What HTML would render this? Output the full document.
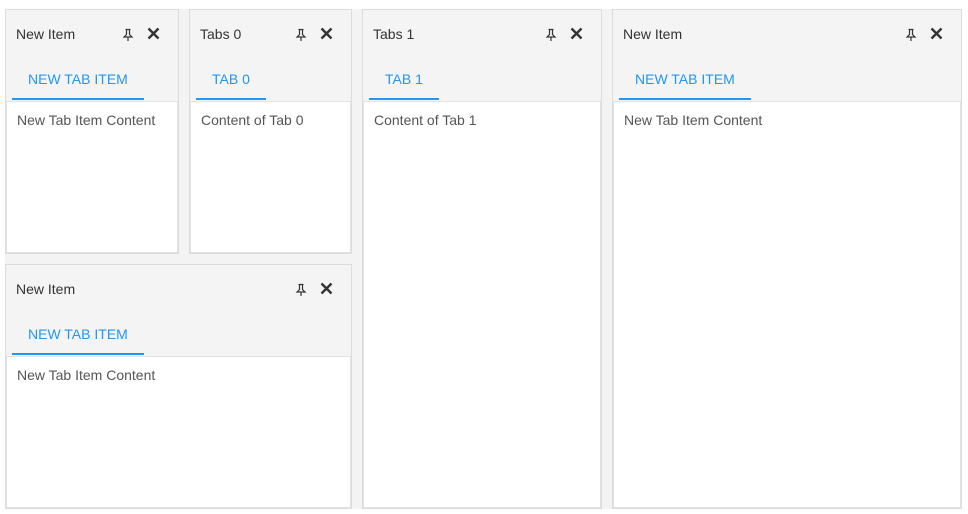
<!DOCTYPE html>
<html><head><style>
body{margin:0;width:968px;height:514px;background:#fff;position:relative;overflow:hidden;font-family:"Liberation Sans",sans-serif}
.gap{position:absolute;background:#f3f3f3}
.p{position:absolute;border:1px solid #dcdcdc;background:#f4f4f4;box-sizing:border-box}
.t{position:absolute;left:10px;top:16px;font-size:14px;color:#333}
.pin{position:absolute;top:18px}
.x{position:absolute;top:17px}
.tab{position:absolute;left:6px;top:58px;height:30px;border-bottom:2px solid #2196f3;padding:0 16px;font-size:14px;color:#2196f3;line-height:22px}
.c{position:absolute;left:0;right:0;top:91px;bottom:0;background:#fff;border:1px solid #e2e2e2;box-sizing:border-box}
.c span{position:absolute;left:10px;top:10px;font-size:14px;color:#555}
</style></head><body>
<div class="gap" style="left:351px;top:9px;width:11px;height:500px"></div>
<div class="gap" style="left:600px;top:9px;width:12px;height:500px"></div>
<div class="gap" style="left:5px;top:253px;width:346px;height:11px"></div>
<div class="gap" style="left:177px;top:9px;width:12px;height:245px"></div>

<div class="p" style="left:5px;top:9px;width:174px;height:245px">
<div class="t">New Item</div>
<svg class="pin" style="left:116px" width="12" height="14" viewBox="0 0 12 14"><path d="M3.5 1.5h5M4.5 1.5v5L2 9h8L7.5 6.5v-5M6 9v4" fill="none" stroke="#333" stroke-width="1.2"/></svg>
<svg class="x" style="left:141px" width="13" height="13" viewBox="0 0 13 13"><path d="M1.5 1.5l10 10M11.5 1.5l-10 10" stroke="#333" stroke-width="2.4"/></svg>
<div class="tab">NEW TAB ITEM</div>
<div class="c"><span>New Tab Item Content</span></div></div>

<div class="p" style="left:189px;top:9px;width:163px;height:245px">
<div class="t">Tabs 0</div>
<svg class="pin" style="left:105px" width="12" height="14" viewBox="0 0 12 14"><path d="M3.5 1.5h5M4.5 1.5v5L2 9h8L7.5 6.5v-5M6 9v4" fill="none" stroke="#333" stroke-width="1.2"/></svg>
<svg class="x" style="left:130px" width="13" height="13" viewBox="0 0 13 13"><path d="M1.5 1.5l10 10M11.5 1.5l-10 10" stroke="#333" stroke-width="2.4"/></svg>
<div class="tab">TAB 0</div>
<div class="c"><span>Content of Tab 0</span></div></div>

<div class="p" style="left:5px;top:264px;width:347px;height:245px">
<div class="t">New Item</div>
<svg class="pin" style="left:289px" width="12" height="14" viewBox="0 0 12 14"><path d="M3.5 1.5h5M4.5 1.5v5L2 9h8L7.5 6.5v-5M6 9v4" fill="none" stroke="#333" stroke-width="1.2"/></svg>
<svg class="x" style="left:314px" width="13" height="13" viewBox="0 0 13 13"><path d="M1.5 1.5l10 10M11.5 1.5l-10 10" stroke="#333" stroke-width="2.4"/></svg>
<div class="tab">NEW TAB ITEM</div>
<div class="c"><span>New Tab Item Content</span></div></div>

<div class="p" style="left:362px;top:9px;width:240px;height:500px">
<div class="t">Tabs 1</div>
<svg class="pin" style="left:182px" width="12" height="14" viewBox="0 0 12 14"><path d="M3.5 1.5h5M4.5 1.5v5L2 9h8L7.5 6.5v-5M6 9v4" fill="none" stroke="#333" stroke-width="1.2"/></svg>
<svg class="x" style="left:207px" width="13" height="13" viewBox="0 0 13 13"><path d="M1.5 1.5l10 10M11.5 1.5l-10 10" stroke="#333" stroke-width="2.4"/></svg>
<div class="tab">TAB 1</div>
<div class="c"><span>Content of Tab 1</span></div></div>

<div class="p" style="left:612px;top:9px;width:350px;height:500px">
<div class="t">New Item</div>
<svg class="pin" style="left:292px" width="12" height="14" viewBox="0 0 12 14"><path d="M3.5 1.5h5M4.5 1.5v5L2 9h8L7.5 6.5v-5M6 9v4" fill="none" stroke="#333" stroke-width="1.2"/></svg>
<svg class="x" style="left:317px" width="13" height="13" viewBox="0 0 13 13"><path d="M1.5 1.5l10 10M11.5 1.5l-10 10" stroke="#333" stroke-width="2.4"/></svg>
<div class="tab">NEW TAB ITEM</div>
<div class="c"><span>New Tab Item Content</span></div></div>
</body></html>
